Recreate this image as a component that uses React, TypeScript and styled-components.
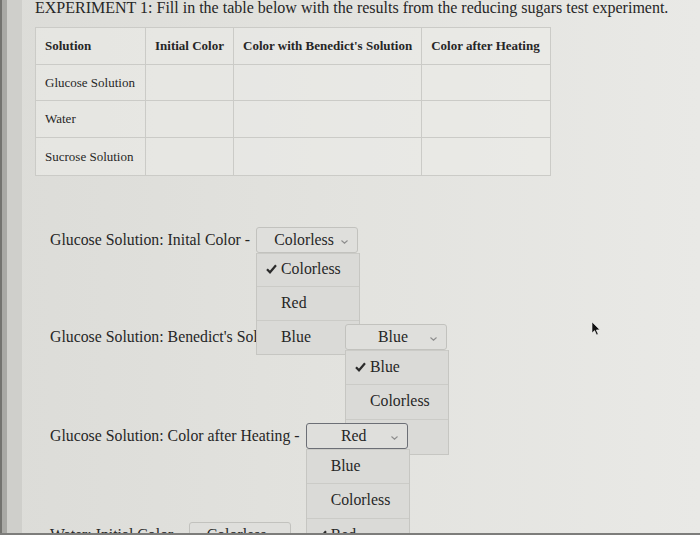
import React from 'react';
import styled, { createGlobalStyle, css } from 'styled-components';

const GlobalStyle = createGlobalStyle`
  html, body {
    margin: 0;
    padding: 0;
    background: #e3e3df;
  }
`;

const SERIF = `'Liberation Serif', 'Times New Roman', serif`;

const Screen = styled.div`
  position: relative;
  display: flex;
  width: 700px;
  height: 535px;
  overflow: hidden;
  box-sizing: border-box;
  border-bottom: 2px solid #7d7d7b;
  background: linear-gradient(90deg, #dcdcd8 0%, #e2e2de 45%, #e9e9e6 100%);
  color: #262626;
  font-family: ${SERIF};
`;

const EdgeStrip = styled.div<{ $width: number; $color: string }>`
  ${({ $width, $color }) => css`
    flex: 0 0 ${$width}px;
    background: ${$color};
  `}
`;

const Content = styled.div`
  flex: 1;
  padding-left: 13px;
`;

const Title = styled.div`
  font-size: 16px;
  line-height: 17px;
  margin-top: -1px;
  white-space: nowrap;
`;

const Table = styled.table`
  margin-top: 11px;
  border-collapse: collapse;
  background: rgba(236, 236, 233, 0.55);
  font-size: 13px;
`;

const Cell = styled.td<{ $width?: number; $head?: boolean; $height: number }>`
  ${({ $width, $head, $height }) => css`
    width: ${$width ? `${$width}px` : 'auto'};
    height: ${$height}px;
    border: 1px solid #cbcbc7;
    padding: 0 9px;
    box-sizing: border-box;
    font-weight: ${$head ? 700 : 400};
    white-space: nowrap;
    vertical-align: middle;
  `}
`;

const Questions = styled.div`
  margin-top: 51px;
  padding-left: 15px;
  display: flex;
  flex-direction: column;
`;

const QuestionRow = styled.div<{ $spaceAfter: number }>`
  ${({ $spaceAfter }) => css`
    display: flex;
    align-items: center;
    height: 26px;
    margin-bottom: ${$spaceAfter}px;
    font-size: 15.8px;
    white-space: nowrap;
  `}
`;

const Label = styled.span<{ $width?: number }>`
  ${({ $width }) => css`
    display: inline-block;
    width: ${$width ? `${$width}px` : 'auto'};
    margin-right: 6px;
  `}
`;

const SelectBox = styled.div<{ $focused?: boolean }>`
  ${({ $focused }) => css`
    position: relative;
    width: 102px;
    height: 26px;
    box-sizing: border-box;
    border: 1px solid ${$focused ? '#6c6f76' : '#c2c2be'};
    border-radius: 3px;
    background: #dfdfdc;
    display: flex;
    align-items: center;
    justify-content: center;
    padding-right: 6px;
  `}
`;

const Caret = styled.svg`
  position: absolute;
  right: 9px;
  top: 12px;
`;

const Menu = styled.div`
  position: absolute;
  top: 25px;
  left: -1px;
  width: 102px;
  background: #dadad7;
  border: 1px solid #c6c6c2;
  border-top: none;
`;

const MenuItem = styled.div<{ $height: number }>`
  ${({ $height }) => css`
    position: relative;
    box-sizing: border-box;
    height: ${$height}px;
    display: flex;
    align-items: center;
    padding-left: 24px;
    padding-bottom: 2px;
    border-top: 1px solid #cbcbc7;
  `}
`;

const Check = styled.svg`
  position: absolute;
  left: 9px;
  top: 50%;
  margin-top: -6px;
`;

const Cursor = styled.svg`
  position: absolute;
  left: 591px;
  top: 321px;
`;

type Option = { label: string; checked?: boolean; height: number };

function Dropdown({ value, options, focused }: { value: string; options?: Option[]; focused?: boolean }) {
  return (
    <SelectBox $focused={focused}>
      {value}
      <Caret width="7" height="4" viewBox="0 0 7 4">
        <path d="M0.5 0.5 L3.5 3.2 L6.5 0.5" fill="none" stroke="#8d8d8d" strokeWidth="1.1" />
      </Caret>
      {options && (
        <Menu>
          {options.map((o) => (
            <MenuItem key={o.label} $height={o.height}>
              {o.checked && (
                <Check width="11" height="10" viewBox="0 0 11 10">
                  <path d="M1 5.2 L4 8.3 L10 1.2" fill="none" stroke="#2b2b2b" strokeWidth="2.2" />
                </Check>
              )}
              {o.label}
            </MenuItem>
          ))}
        </Menu>
      )}
    </SelectBox>
  );
}

const rows = ['Glucose Solution', 'Water', 'Sucrose Solution'];
const rowHeights = [36, 37, 38];

export default function App() {
  return (
    <>
      <GlobalStyle />
      <Screen>
        <EdgeStrip $width={2} $color="#73736f" />
        <EdgeStrip $width={5} $color="#a9a9a5" />
        <EdgeStrip $width={15} $color="#cfcfcb" />
        <Content>
          <Title>
            EXPERIMENT 1: Fill in the table below with the results from the reducing sugars test experiment.
          </Title>
          <Table>
            <tbody>
              <tr>
                <Cell $head $width={110} $height={37}>Solution</Cell>
                <Cell $head $width={88} $height={37}>Initial Color</Cell>
                <Cell $head $width={187} $height={37}>Color with Benedict's Solution</Cell>
                <Cell $head $width={129} $height={37}>Color after Heating</Cell>
              </tr>
              {rows.map((r, i) => (
                <tr key={r}>
                  <Cell $height={rowHeights[i]}>{r}</Cell>
                  <Cell $height={rowHeights[i]} />
                  <Cell $height={rowHeights[i]} />
                  <Cell $height={rowHeights[i]} />
                </tr>
              ))}
            </tbody>
          </Table>
          <Questions>
            <QuestionRow $spaceAfter={71}>
              <Label>Glucose Solution: Inital Color -</Label>
              <Dropdown
                value="Colorless"
                options={[
                  { label: 'Colorless', checked: true, height: 33 },
                  { label: 'Red', height: 34 },
                  { label: 'Blue', height: 34 },
                ]}
              />
            </QuestionRow>
            <QuestionRow $spaceAfter={73}>
              <Label $width={289}>Glucose Solution: Benedict's Solution -</Label>
              <Dropdown
                value="Blue"
                options={[
                  { label: 'Blue', checked: true, height: 34 },
                  { label: 'Colorless', height: 35 },
                  { label: 'Red', height: 35 },
                ]}
              />
            </QuestionRow>
            <QuestionRow $spaceAfter={73}>
              <Label>Glucose Solution: Color after Heating -</Label>
              <Dropdown
                focused
                value="Red"
                options={[
                  { label: 'Blue', height: 34 },
                  { label: 'Colorless', height: 35 },
                  { label: 'Red', checked: true, height: 34 },
                ]}
              />
            </QuestionRow>
            <QuestionRow $spaceAfter={0}>
              <Label>Water: Initial Color -</Label>
              <Dropdown value="Colorless" />
            </QuestionRow>
          </Questions>
        </Content>
        <Cursor width="10" height="15" viewBox="0 0 10 15">
          <path d="M1 1 L1 12 L3.6 9.6 L5.6 14 L7.2 13.2 L5.3 9 L8.8 8.8 Z" fill="#111" stroke="#f2f2f2" strokeWidth="0.6" />
        </Cursor>
      </Screen>
    </>
  );
}
